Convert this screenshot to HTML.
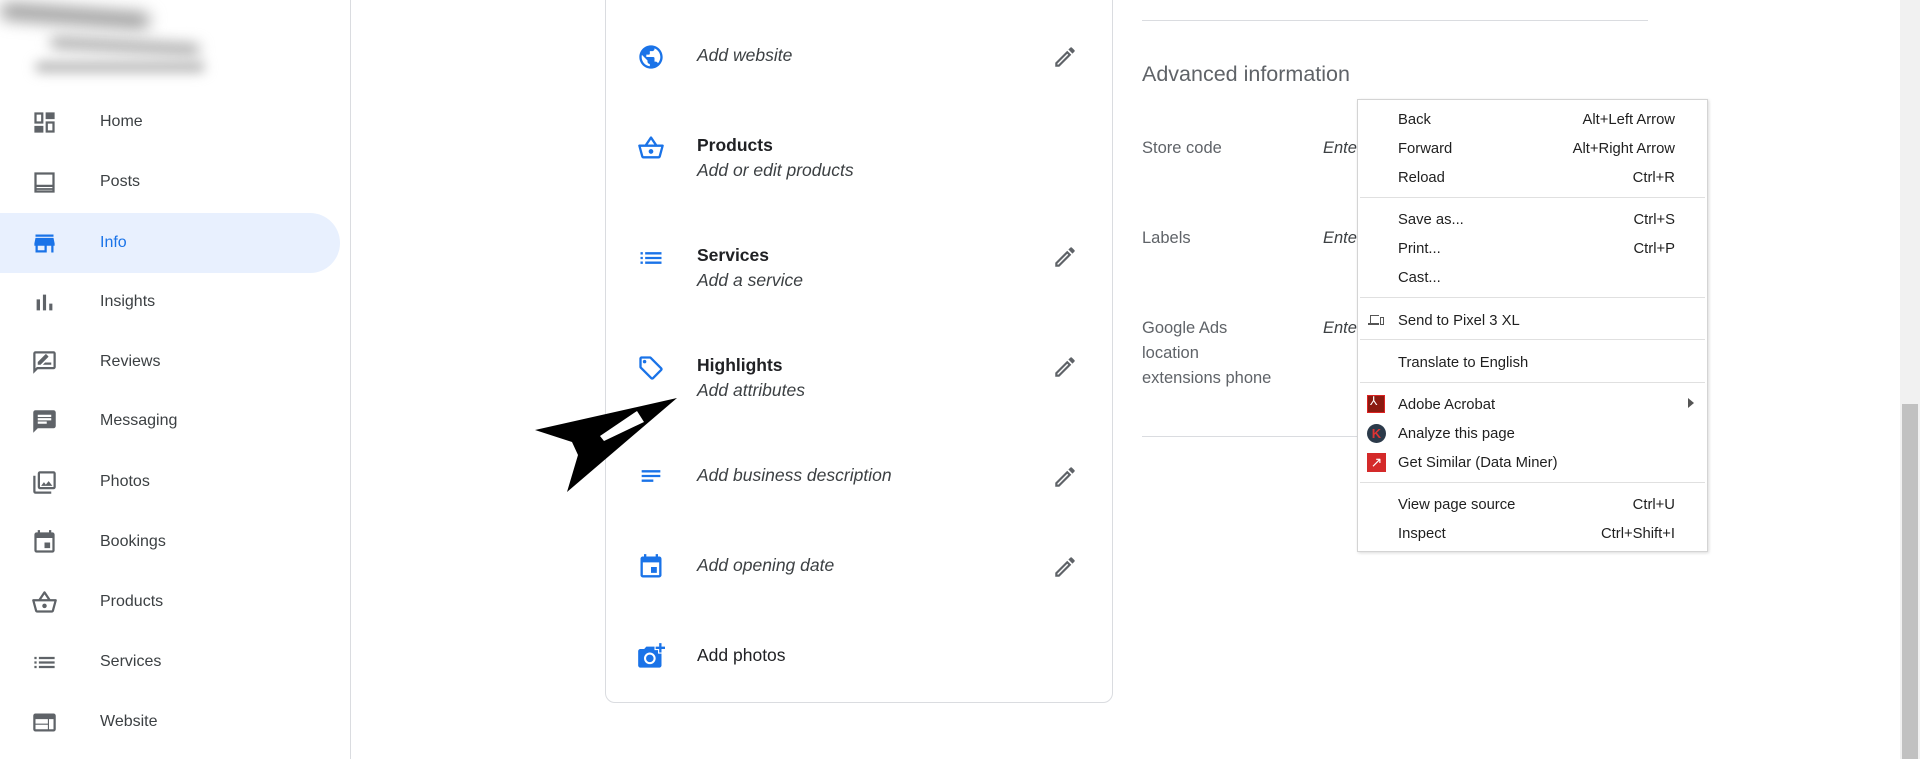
<!DOCTYPE html>
<html><head><meta charset="utf-8"><style>
*{margin:0;padding:0;box-sizing:border-box}
body{width:1920px;height:759px;overflow:hidden;background:#fff;font-family:"Liberation Sans",Arial,sans-serif;position:relative}
.a{position:absolute}
.nav{position:absolute;left:0;width:340px;height:60px;display:flex;align-items:center;font-size:16px;color:#3c4043}
.nav svg{position:absolute;left:31px;width:27px;height:27px;fill:#5f6368}
.nav span{position:absolute;left:100px}
.nav.on{background:#e8f0fe;border-radius:0 30px 30px 0;color:#1a73e8}
.nav.on svg{fill:#1a73e8}
.ci{position:absolute;left:637px;width:28px;height:28px;fill:#1a73e8}
.pen{position:absolute;left:1052px;width:26px;height:26px;fill:#5f6368}
.ct{position:absolute;left:697px;font-size:17.5px;color:#202124;line-height:25px}
.ct b{font-weight:bold}
.ct i{color:#3c4043}
.rl{position:absolute;left:1142px;font-size:16.5px;color:#5f6368;line-height:25px}
.m{position:absolute;left:1398px;font-size:14.8px;color:#1f1f1f}
.k{position:absolute;right:245px;font-size:14.8px;color:#1f1f1f}
.sep{position:absolute;left:1360px;width:345px;height:1px;background:#e0e0e0}
</style></head><body>
<!-- blurred logo -->
<div class="a" style="left:0;top:8px;width:150px;height:16px;background:#999;border-radius:8px;filter:blur(8px);transform:rotate(4deg)"></div>
<div class="a" style="left:50px;top:40px;width:150px;height:12px;background:#aaa;border-radius:8px;filter:blur(7px);transform:rotate(3deg)"></div>
<div class="a" style="left:35px;top:62px;width:170px;height:10px;background:#b0b0b0;border-radius:8px;filter:blur(6px)"></div>
<div class="a" style="left:350px;top:0;width:1px;height:759px;background:#dadce0"></div>

<div class="nav" style="top:92px"><svg viewBox="0 0 24 24"><path d="M3 3h8v10H3zm2 2v6h4V5zM3 15h8v6H3zm10-12h8v6h-8zm0 8h8v10h-8zm2 2v6h4v-6z"/></svg><span>Home</span></div>
<div class="nav" style="top:152px"><svg viewBox="0 0 24 24"><path d="M3 3h18v18H3zm2 2v9h14V5zm0 11v1h14v-1zm0 2.5v.5h14v-.5z"/></svg><span>Posts</span></div>
<div class="nav on" style="top:213px"><svg viewBox="0 0 24 24"><path d="M20 4H4v2h16V4zm1 10v-2l-1-5H4l-1 5v2h1v6h10v-6h4v6h2v-6h1zm-9 4H6v-4h6v4z"/></svg><span>Info</span></div>
<div class="nav" style="top:272px"><svg viewBox="0 0 24 24"><path d="M5 9.2h3V19H5zM10.6 5h2.8v14h-2.8zm5.6 8H19v6h-2.8z"/></svg><span>Insights</span></div>
<div class="nav" style="top:332px"><svg viewBox="0 0 24 24"><path d="M20 2H4c-1.1 0-2 .9-2 2v18l4-4h14c1.1 0 2-.9 2-2V4c0-1.1-.9-2-2-2zm0 14H5.2L4 17.2V4h16zM6 14v-2.47l6.88-6.88c.2-.2.51-.2.71 0l1.77 1.77c.2.2.2.51 0 .71L8.470 14zm12 0h-7.5l2-2H18z"/></svg><span>Reviews</span></div>
<div class="nav" style="top:391px"><svg viewBox="0 0 24 24"><path d="M20 2H4c-1.1 0-1.99.9-1.99 2L2 22l4-4h14c1.1 0 2-.9 2-2V4c0-1.1-.9-2-2-2zM6 9h12v2H6V9zm8 5H6v-2h8v2zm4-6H6V6h12v2z"/></svg><span>Messaging</span></div>
<div class="nav" style="top:452px"><svg viewBox="0 0 24 24"><path d="M20 4v12H8V4h12m0-2H8c-1.1 0-2 .9-2 2v12c0 1.1.9 2 2 2h12c1.1 0 2-.9 2-2V4c0-1.1-.9-2-2-2zm-8.5 9.67l1.69 2.26 2.48-3.1L19 15H9zM2 6v14c0 1.1.9 2 2 2h14v-2H4V6H2z"/></svg><span>Photos</span></div>
<div class="nav" style="top:512px"><svg viewBox="0 0 24 24"><path d="M17 12h-5v5h5v-5zM16 1v2H8V1H6v2H5c-1.11 0-1.99.9-1.99 2L3 19c0 1.1.89 2 2 2h14c1.1 0 2-.9 2-2V5c0-1.1-.9-2-2-2h-1V1h-2zm3 18H5V8h14v11z"/></svg><span>Bookings</span></div>
<div class="nav" style="top:572px"><svg viewBox="0 0 24 24"><path d="M22 9h-4.79l-4.38-6.56c-.19-.28-.51-.42-.83-.42s-.64.14-.83.43L6.79 9H2c-.55 0-1 .45-1 1l2.58 9.540c.23.84 1 1.46 1.92 1.46h13c.92 0 1.69-.62 1.93-1.46L23 10c0-.55-.45-1-1-1zM12 4.8L14.8 9H9.2L12 4.8zM18.5 19H5.5L3.31 11H20.7l-2.2 8zM12 13c-1.1 0-2 .9-2 2s.9 2 2 2 2-.9 2-2-.9-2-2-2z"/></svg><span>Products</span></div>
<div class="nav" style="top:632px"><svg viewBox="0 0 24 24"><path d="M3 13h2v-2H3v2zm0 4h2v-2H3v2zm0-8h2V7H3v2zm4 4h14v-2H7v2zm0 4h14v-2H7v2zM7 7v2h14V7H7z"/></svg><span>Services</span></div>
<div class="nav" style="top:692px"><svg viewBox="0 0 24 24"><path d="M20 4H4c-1.1 0-1.99.9-1.99 2L2 18c0 1.1.9 2 2 2h16c1.1 0 2-.9 2-2V6c0-1.1-.9-2-2-2zm-5 14H4v-4h11v4zm0-5H4V9h11v4zm5 5h-4V9h4v9z"/></svg><span>Website</span></div>

<!-- card -->
<div class="a" style="left:605px;top:-20px;width:508px;height:723px;border:1px solid #dadce0;border-radius:10px"></div>

<svg class="ci" style="top:43px" viewBox="0 0 24 24"><path d="M12 2C6.48 2 2 6.48 2 12s4.48 10 10 10 10-4.48 10-10S17.52 2 12 2zm-1 17.93c-3.95-.49-7-3.85-7-7.93 0-.62.08-1.21.21-1.790L9 15v1c0 1.1.9 2 2 2v1.93zm6.9-2.54c-.26-.81-1-1.39-1.9-1.39h-1v-3c0-.55-.45-1-1-1H8v-2h2c.55 0 1-.45 1-1V7h2c1.1 0 2-.9 2-2v-.41c2.93 1.19 5 4.06 5 7.41 0 2.08-.8 3.97-2.1 5.39z"/></svg>
<div class="ct" style="top:43px"><i>Add website</i></div>
<svg class="pen" style="top:44px" viewBox="0 0 24 24"><path d="M14.06 9.02l.92.92L5.92 19H5v-.92l9.06-9.06M17.66 3c-.25 0-.51.1-.7.29l-1.83 1.83 3.75 3.75 1.83-1.83c.39-.39.39-1.02 0-1.41l-2.34-2.34c-.2-.2-.45-.29-.71-.29zm-3.6 3.19L3 17.25V21h3.75L17.81 9.94l-3.75-3.75z"/></svg>

<svg class="ci" style="top:134px" viewBox="0 0 24 24"><path d="M22 9h-4.79l-4.38-6.56c-.19-.28-.51-.42-.83-.42s-.64.14-.83.43L6.79 9H2c-.55 0-1 .45-1 1l2.58 9.54c.23.84 1 1.46 1.92 1.46h13c.92 0 1.69-.62 1.93-1.46L23 10c0-.55-.45-1-1-1zM12 4.8L14.8 9H9.2L12 4.8zM18.5 19H5.5L3.31 11H20.7l-2.2 8zM12 13c-1.1 0-2 .9-2 2s.9 2 2 2 2-.9 2-2-.9-2-2-2z"/></svg>
<div class="ct" style="top:133px"><b>Products</b><br><i>Add or edit products</i></div>

<svg class="ci" style="top:244px" viewBox="0 0 24 24"><path d="M3 13h2v-2H3v2zm0 4h2v-2H3v2zm0-8h2V7H3v2zm4 4h14v-2H7v2zm0 4h14v-2H7v2zM7 7v2h14V7H7z"/></svg>
<div class="ct" style="top:243px"><b>Services</b><br><i>Add a service</i></div>
<svg class="pen" style="top:244px" viewBox="0 0 24 24"><path d="M14.06 9.02l.92.92L5.92 19H5v-.92l9.06-9.06M17.66 3c-.25 0-.51.1-.7.29l-1.83 1.83 3.75 3.75 1.83-1.83c.39-.39.39-1.02 0-1.41l-2.34-2.34c-.2-.2-.45-.29-.71-.29zm-3.6 3.19L3 17.25V21h3.75L17.81 9.94l-3.75-3.75z"/></svg>

<svg class="ci" style="top:354px" viewBox="0 0 24 24"><path d="M21.41 11.58l-9-9C12.05 2.22 11.55 2 11 2H4c-1.1 0-2 .9-2 2v7c0 .55.22 1.05.59 1.42l9 9c.36.36.86.58 1.41.58.55 0 1.05-.22 1.41-.59l7-7c.37-.36.59-.86.59-1.41 0-.55-.23-1.06-.59-1.42zM13 20.01L4 11V4h7v-.01l9 9-7 7.02z"/><circle cx="6.5" cy="6.5" r="1.5"/></svg>
<div class="ct" style="top:353px"><b>Highlights</b><br><i>Add attributes</i></div>
<svg class="pen" style="top:354px" viewBox="0 0 24 24"><path d="M14.06 9.02l.92.92L5.92 19H5v-.92l9.06-9.06M17.66 3c-.25 0-.51.1-.7.29l-1.83 1.83 3.75 3.75 1.83-1.83c.39-.39.39-1.02 0-1.41l-2.34-2.34c-.2-.2-.45-.29-.71-.29zm-3.6 3.19L3 17.25V21h3.75L17.81 9.94l-3.75-3.75z"/></svg>

<svg class="ci" style="top:462px" viewBox="0 0 24 24"><path d="M4 7h16v2H4zm0 4h16v2H4zm0 4h10v2H4z"/></svg>
<div class="ct" style="top:463px"><i>Add business description</i></div>
<svg class="pen" style="top:464px" viewBox="0 0 24 24"><path d="M14.06 9.02l.92.92L5.92 19H5v-.92l9.06-9.06M17.66 3c-.25 0-.51.1-.7.29l-1.83 1.83 3.75 3.75 1.83-1.83c.39-.39.39-1.02 0-1.41l-2.34-2.34c-.2-.2-.45-.29-.71-.29zm-3.6 3.19L3 17.25V21h3.75L17.81 9.94l-3.75-3.75z"/></svg>

<svg class="ci" style="top:553px" viewBox="0 0 24 24"><path d="M17 12h-5v5h5v-5zM16 1v2H8V1H6v2H5c-1.11 0-1.99.9-1.99 2L3 19c0 1.1.89 2 2 2h14c1.1 0 2-.9 2-2V5c0-1.1-.9-2-2-2h-1V1h-2zm3 18H5V8h14v11z"/></svg>
<div class="ct" style="top:553px"><i>Add opening date</i></div>
<svg class="pen" style="top:554px" viewBox="0 0 24 24"><path d="M14.06 9.02l.92.92L5.92 19H5v-.92l9.06-9.06M17.66 3c-.25 0-.51.1-.7.29l-1.83 1.83 3.75 3.75 1.83-1.83c.39-.39.39-1.02 0-1.41l-2.34-2.34c-.2-.2-.45-.29-.71-.29zm-3.6 3.19L3 17.25V21h3.75L17.81 9.94l-3.75-3.75z"/></svg>

<svg class="ci" style="top:642px;transform:scaleX(-1)" viewBox="0 0 24 24"><path d="M3 4V1h2v3h3v2H5v3H3V6H0V4h3zm3 6V7h3V4h7l1.83 2H21c1.1 0 2 .9 2 2v12c0 1.1-.9 2-2 2H5c-1.1 0-2-.9-2-2V10h3zm7 9c2.76 0 5-2.24 5-5s-2.24-5-5-5-5 2.24-5 5 2.24 5 5 5zm-3.2-5c0 1.77 1.43 3.2 3.2 3.2s3.2-1.43 3.2-3.2-1.430-3.2-3.2-3.2-3.2 1.43-3.2 3.2z"/></svg>
<div class="ct" style="top:643px">Add photos</div>

<!-- arrow -->
<svg class="a" style="left:0;top:0" width="1920" height="759"><polygon points="535,430 677,398 567,492 578,455 572,442" fill="#000"/><polygon points="600,436 637,411 644,422 604,441" fill="#fff"/></svg>

<!-- right panel -->
<div class="a" style="left:1142px;top:20px;width:506px;height:1px;background:#dadce0"></div>
<div class="a" style="left:1142px;top:62px;font-size:21.5px;color:#5f6368">Advanced information</div>
<div class="rl" style="top:136px">Store code</div>
<div class="rl" style="top:226px">Labels</div>
<div class="rl" style="top:316px">Google Ads<br>location<br>extensions phone</div>
<div class="rl" style="top:136px;left:1323px;font-style:italic;color:#3c4043">Ente</div>
<div class="rl" style="top:226px;left:1323px;font-style:italic;color:#3c4043">Ente</div>
<div class="rl" style="top:316px;left:1323px;font-style:italic;color:#3c4043">Ente</div>
<div class="a" style="left:1142px;top:436px;width:220px;height:1px;background:#dadce0"></div>

<!-- context menu -->
<div class="a" style="left:1357px;top:99px;width:351px;height:453px;background:#fff;border:1px solid #d4d4d4;box-shadow:1px 1px 3px rgba(0,0,0,.15)"></div>
<div class="m" style="top:112px">Back</div><div class="k" style="top:112px">Alt+Left Arrow</div>
<div class="m" style="top:141px">Forward</div><div class="k" style="top:141px">Alt+Right Arrow</div>
<div class="m" style="top:170px">Reload</div><div class="k" style="top:170px">Ctrl+R</div>
<div class="sep" style="top:197px"></div>
<div class="m" style="top:212px">Save as...</div><div class="k" style="top:212px">Ctrl+S</div>
<div class="m" style="top:241px">Print...</div><div class="k" style="top:241px">Ctrl+P</div>
<div class="m" style="top:270px">Cast...</div>
<div class="sep" style="top:297px"></div>
<svg class="a" style="left:1367px;top:313px" width="18" height="14" viewBox="0 0 18 14"><path d="M3 2h9v1H4v7H3zM1 10h11v2H1zM13 4h4v8h-4zm1 1v6h2V5z" fill="#555"/></svg>
<div class="m" style="top:313px">Send to Pixel 3 XL</div>
<div class="sep" style="top:339px"></div>
<div class="m" style="top:355px">Translate to English</div>
<div class="sep" style="top:382px"></div>
<div class="a" style="left:1367px;top:395px;width:18px;height:18px;background:#8b1a10;border:1px solid #d22"></div>
<div class="a" style="left:1370px;top:394px;font-size:12px;color:#fff">⅄</div>
<div class="m" style="top:397px">Adobe Acrobat</div>
<div class="a" style="left:1688px;top:398px;width:0;height:0;border-left:6px solid #555;border-top:5px solid transparent;border-bottom:5px solid transparent"></div>
<div class="a" style="left:1367px;top:424px;width:19px;height:19px;border-radius:50%;background:#2b3a4a;color:#d33;font-size:13px;font-weight:bold;text-align:center;line-height:19px">K</div>
<div class="m" style="top:426px">Analyze this page</div>
<div class="a" style="left:1367px;top:453px;width:19px;height:19px;background:#d42a2a;color:#fff;font-size:14px;text-align:center;line-height:19px">↗</div>
<div class="m" style="top:455px">Get Similar (Data Miner)</div>
<div class="sep" style="top:482px"></div>
<div class="m" style="top:497px">View page source</div><div class="k" style="top:497px">Ctrl+U</div>
<div class="m" style="top:526px">Inspect</div><div class="k" style="top:526px">Ctrl+Shift+I</div>

<!-- scrollbar -->
<div class="a" style="left:1900px;top:0;width:20px;height:759px;background:#f1f1f1"></div>
<div class="a" style="left:1902px;top:404px;width:16px;height:355px;background:#c1c1c1"></div>
</body></html>
